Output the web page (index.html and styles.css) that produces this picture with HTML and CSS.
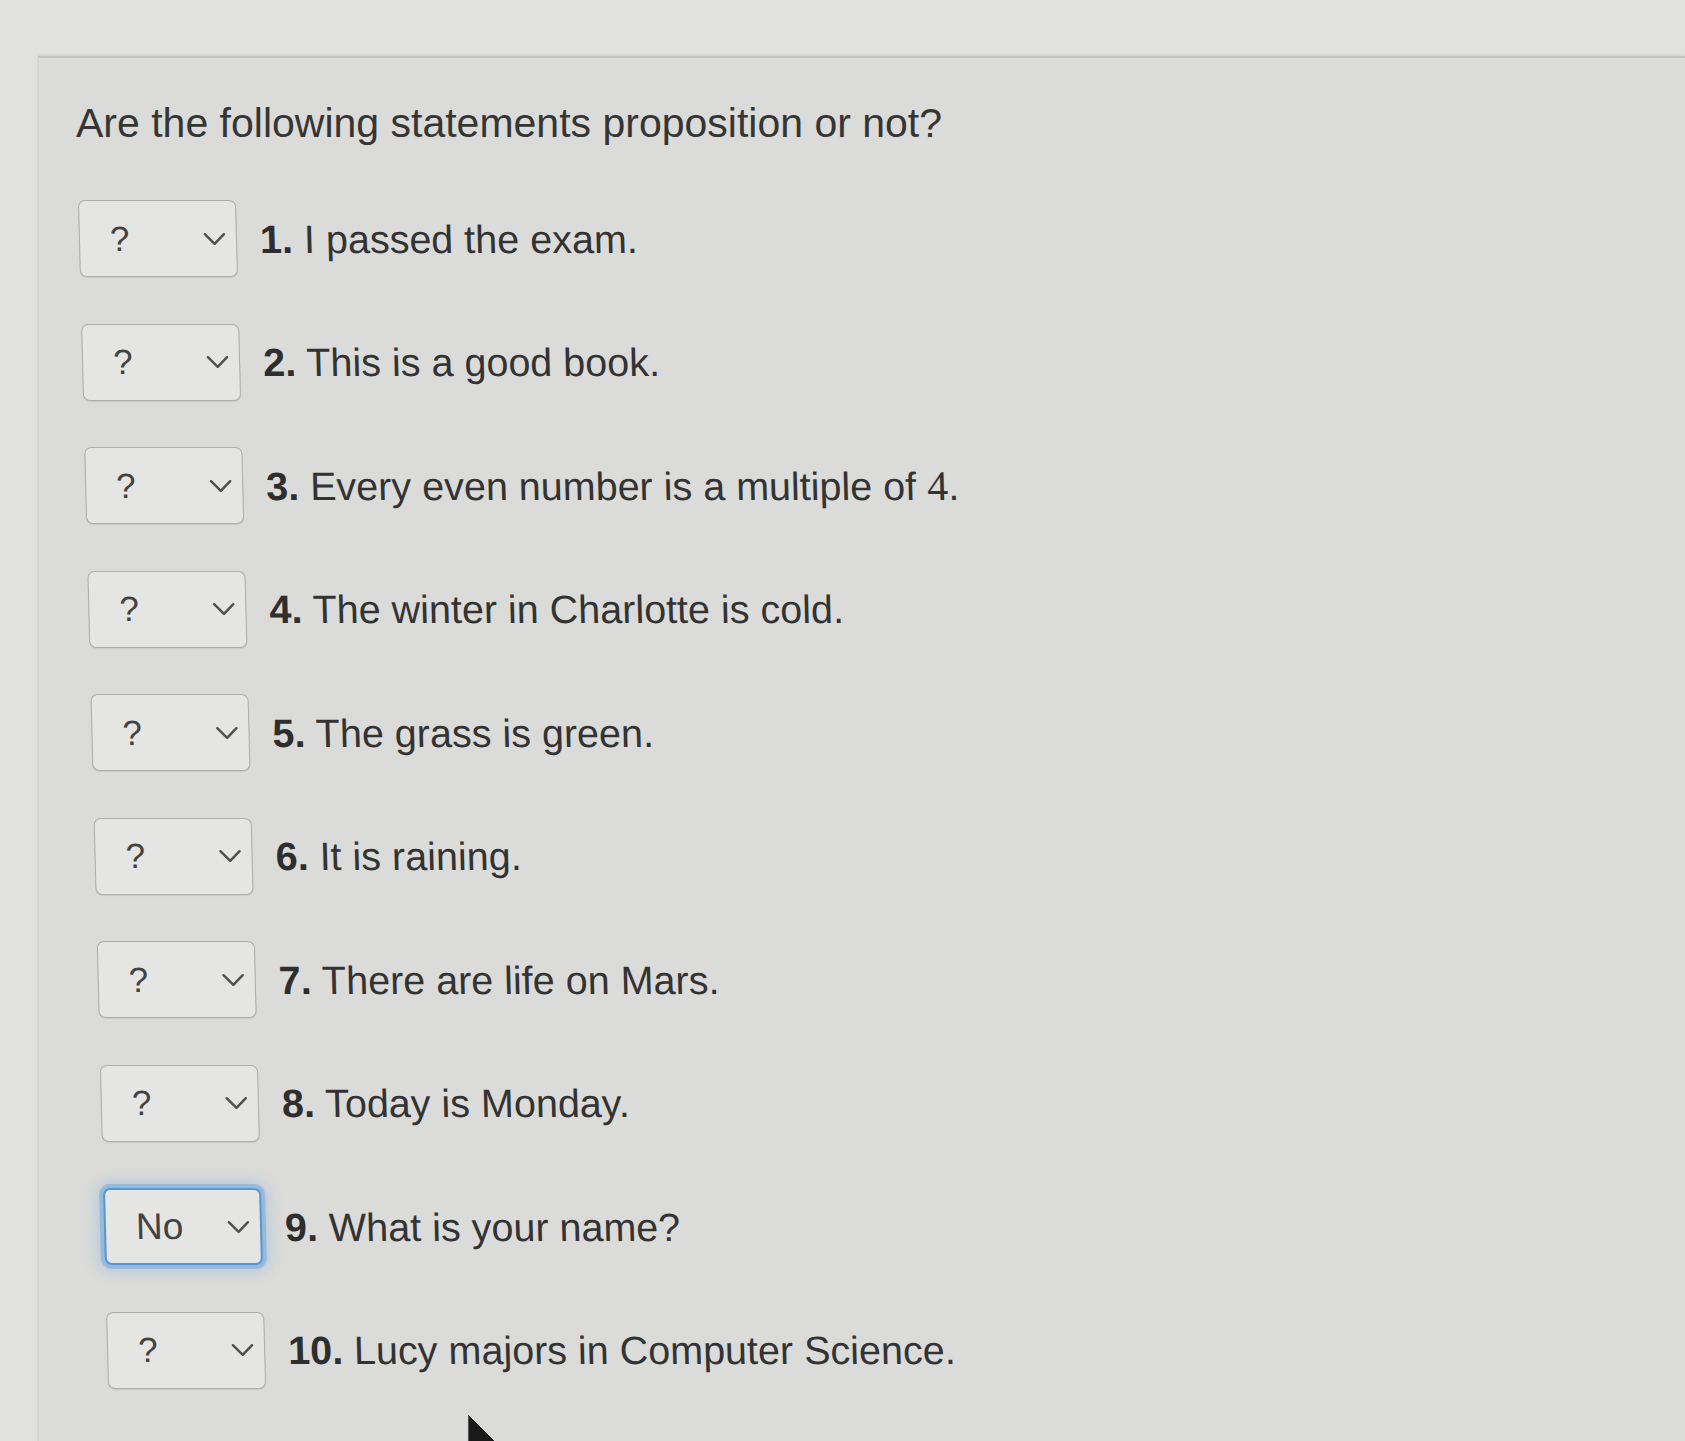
FILE: index.html
```html
<!DOCTYPE html>
<html lang="en">
<head>
    <meta charset="UTF-8">
    <meta name="viewport" content="width=device-width, initial-scale=1.0">
    <title>Propositions</title>
    <link rel="stylesheet" href="styles.css">
</head>
<body>
    <div class="top-strip"></div>
    <main class="panel">
        <h1>Are the following statements proposition or not?</h1>
        <ol class="questions">
            <li class="row">
                <div class="picker"><span>?</span><svg viewBox="0 0 24 14"><path d="M2 2 L12 12 L22 2"/></svg></div>
                <p><b>1.</b> I passed the exam.</p>
            </li>
            <li class="row">
                <div class="picker"><span>?</span><svg viewBox="0 0 24 14"><path d="M2 2 L12 12 L22 2"/></svg></div>
                <p><b>2.</b> This is a good book.</p>
            </li>
            <li class="row">
                <div class="picker"><span>?</span><svg viewBox="0 0 24 14"><path d="M2 2 L12 12 L22 2"/></svg></div>
                <p><b>3.</b> Every even number is a multiple of <span class="math">4</span>.</p>
            </li>
            <li class="row">
                <div class="picker"><span>?</span><svg viewBox="0 0 24 14"><path d="M2 2 L12 12 L22 2"/></svg></div>
                <p><b>4.</b> The winter in Charlotte is cold.</p>
            </li>
            <li class="row">
                <div class="picker"><span>?</span><svg viewBox="0 0 24 14"><path d="M2 2 L12 12 L22 2"/></svg></div>
                <p><b>5.</b> The grass is green.</p>
            </li>
            <li class="row">
                <div class="picker"><span>?</span><svg viewBox="0 0 24 14"><path d="M2 2 L12 12 L22 2"/></svg></div>
                <p><b>6.</b> It is raining.</p>
            </li>
            <li class="row">
                <div class="picker"><span>?</span><svg viewBox="0 0 24 14"><path d="M2 2 L12 12 L22 2"/></svg></div>
                <p><b>7.</b> There are life on Mars.</p>
            </li>
            <li class="row">
                <div class="picker"><span>?</span><svg viewBox="0 0 24 14"><path d="M2 2 L12 12 L22 2"/></svg></div>
                <p><b>8.</b> Today is Monday.</p>
            </li>
            <li class="row">
                <div class="picker focused"><span>No</span><svg viewBox="0 0 24 14"><path d="M2 2 L12 12 L22 2"/></svg></div>
                <p><b>9.</b> What is your name?</p>
            </li>
            <li class="row">
                <div class="picker"><span>?</span><svg viewBox="0 0 24 14"><path d="M2 2 L12 12 L22 2"/></svg></div>
                <p><b>10.</b> Lucy majors in Computer Science.</p>
            </li>
        </ol>
    </main>

    <!-- mouse pointer -->
    <svg class="cursor" viewBox="0 0 40 60"><path d="M2 2 L2 50 L13 39 L21 58 L29 54 L21 36 L36 36 Z"/></svg>
</body>
</html>
```

FILE: styles.css
```css
body {
    font-family: "Liberation Sans", Arial, sans-serif;
    background-color: #e1e1df;
    color: #333;
    margin: 0;
    padding: 0;
    height: 1441px;
    overflow: hidden;
}
.top-strip {
    height: 56px;
}
.panel {
    margin-left: 38px;
    border-top: 2px solid #c4c4c2;
    border-left: 1px solid #d2d2d0;
    box-shadow: 0 -1px 3px rgba(0, 0, 0, 0.08);
    background-color: #dbdbd9;
    padding: 41px 0 0 37px;
    height: 1400px;
}
h1 {
    font-size: 41px;
    font-weight: normal;
    line-height: 48px;
    margin: 0;
    color: #353535;
}
.questions {
    list-style: none;
    margin: 53px 0 0 2px;
    padding: 0;
    display: flex;
    flex-direction: column;
    gap: 46.5px;
    transform: skewX(1.45deg);
    transform-origin: 0 0;
}
.row {
    display: flex;
    align-items: center;
    gap: 23px;
}
.row p {
    margin: 0;
    font-size: 39.5px;
    line-height: 48px;
    white-space: nowrap;
    color: #333;
}
.row b {
    font-weight: bold;
    color: #2e2e2e;
}
.math {
    font-family: "Liberation Serif", "Times New Roman", serif;
    font-size: 42px;
}
.picker {
    box-sizing: border-box;
    width: 158px;
    height: 77px;
    display: flex;
    align-items: center;
    justify-content: space-between;
    padding: 0 10px 0 30px;
    border: 1.5px solid #adadab;
    border-radius: 7px;
    background-color: #e5e5e3;
    box-shadow: 0 1px 1px rgba(0, 0, 0, 0.08);
}
.picker span {
    font-size: 35px;
    color: #424242;
}
.picker svg {
    width: 23px;
    height: 14px;
    fill: none;
    stroke: #505050;
    stroke-width: 2.6;
    stroke-linecap: round;
    stroke-linejoin: round;
}
.picker.focused {
    border: 2px solid #5896d0;
    box-shadow: 0 0 0 4px rgba(110, 165, 220, 0.5), 0 0 14px 6px rgba(120, 170, 225, 0.4);
    padding-left: 30px;
}
.picker.focused span {
    font-size: 37px;
}
.cursor {
    position: absolute;
    left: 466px;
    top: 1412px;
    width: 36px;
    height: 54px;
    fill: #1a1a1a;
    stroke: #eee;
    stroke-width: 1;
}
```
